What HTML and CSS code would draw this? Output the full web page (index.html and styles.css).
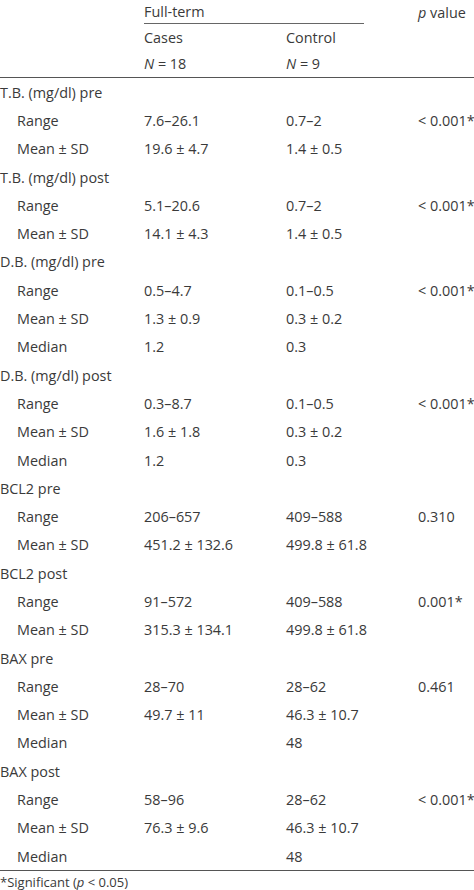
FILE: index.html
```html
<!DOCTYPE html>
<html>
<head>
<meta charset="utf-8">
<link rel="stylesheet" href="styles.css">
</head>
<body>
<div class="frame">
<table class="tbl">
  <colgroup>
    <col class="c1"><col class="c2"><col class="c3"><col class="c4">
  </colgroup>
  <thead>
    <tr class="h1"><th></th><th colspan="2" class="span"><span class="spanline">Full-term</span></th><th><i>p</i> value</th></tr>
    <tr class="h2"><th></th><th>Cases</th><th>Control</th><th></th></tr>
    <tr class="h3"><th></th><th><i>N</i> = 18</th><th><i>N</i> = 9</th><th></th></tr>
  </thead>
  <tbody>
    <tr><td class="grp">T.B. (mg/dl) pre</td><td></td><td></td><td></td></tr>
    <tr><td class="sub">Range</td><td>7.6–26.1</td><td>0.7–2</td><td>&lt; 0.001*</td></tr>
    <tr><td class="sub">Mean ± SD</td><td>19.6 ± 4.7</td><td>1.4 ± 0.5</td><td></td></tr>
    <tr><td class="grp">T.B. (mg/dl) post</td><td></td><td></td><td></td></tr>
    <tr><td class="sub">Range</td><td>5.1–20.6</td><td>0.7–2</td><td>&lt; 0.001*</td></tr>
    <tr><td class="sub">Mean ± SD</td><td>14.1 ± 4.3</td><td>1.4 ± 0.5</td><td></td></tr>
    <tr><td class="grp">D.B. (mg/dl) pre</td><td></td><td></td><td></td></tr>
    <tr><td class="sub">Range</td><td>0.5–4.7</td><td>0.1–0.5</td><td>&lt; 0.001*</td></tr>
    <tr><td class="sub">Mean ± SD</td><td>1.3 ± 0.9</td><td>0.3 ± 0.2</td><td></td></tr>
    <tr><td class="sub">Median</td><td>1.2</td><td>0.3</td><td></td></tr>
    <tr><td class="grp">D.B. (mg/dl) post</td><td></td><td></td><td></td></tr>
    <tr><td class="sub">Range</td><td>0.3–8.7</td><td>0.1–0.5</td><td>&lt; 0.001*</td></tr>
    <tr><td class="sub">Mean ± SD</td><td>1.6 ± 1.8</td><td>0.3 ± 0.2</td><td></td></tr>
    <tr><td class="sub">Median</td><td>1.2</td><td>0.3</td><td></td></tr>
    <tr><td class="grp">BCL2 pre</td><td></td><td></td><td></td></tr>
    <tr><td class="sub">Range</td><td>206–657</td><td>409–588</td><td>0.310</td></tr>
    <tr><td class="sub">Mean ± SD</td><td>451.2 ± 132.6</td><td>499.8 ± 61.8</td><td></td></tr>
    <tr><td class="grp">BCL2 post</td><td></td><td></td><td></td></tr>
    <tr><td class="sub">Range</td><td>91–572</td><td>409–588</td><td>0.001*</td></tr>
    <tr><td class="sub">Mean ± SD</td><td>315.3 ± 134.1</td><td>499.8 ± 61.8</td><td></td></tr>
    <tr><td class="grp">BAX pre</td><td></td><td></td><td></td></tr>
    <tr><td class="sub">Range</td><td>28–70</td><td>28–62</td><td>0.461</td></tr>
    <tr><td class="sub">Mean ± SD</td><td>49.7 ± 11</td><td>46.3 ± 10.7</td><td></td></tr>
    <tr><td class="sub">Median</td><td></td><td>48</td><td></td></tr>
    <tr><td class="grp">BAX post</td><td></td><td></td><td></td></tr>
    <tr><td class="sub">Range</td><td>58–96</td><td>28–62</td><td>&lt; 0.001*</td></tr>
    <tr><td class="sub">Mean ± SD</td><td>76.3 ± 9.6</td><td>46.3 ± 10.7</td><td></td></tr>
    <tr class="last"><td class="sub">Median</td><td></td><td>48</td><td></td></tr>
  </tbody>
</table>
<p class="note">*Significant (<i>p</i> &lt; 0.05)</p>
</div>
</body>
</html>
```
FILE: styles.css
```css
html, body {
  margin: 0;
  padding: 0;
  background: #ffffff;
  overflow: hidden;
}
.frame {
  width: 474px;
  height: 890px;
  overflow: hidden;
  font-family: "Open Sans", "Liberation Sans", sans-serif;
  font-size: 14.4px;
  color: #3a3a3a;
}
.tbl {
  width: 492px;
  table-layout: fixed;
  border-collapse: collapse;
  border-spacing: 0;
}
.c1 { width: 144px; }
.c2 { width: 142px; }
.c3 { width: 132px; }
.c4 { width: 74px; }
.tbl th, .tbl td {
  padding: 0;
  text-align: left;
  font-weight: normal;
  white-space: nowrap;
  vertical-align: middle;
}
.h1 th { height: 24px; }
.h2 th { height: 26px; }
.h3 th { height: 27px; border-bottom: 1px solid #555; }
.tbl th.span {
  padding-right: 110px;
}
.spanline {
  display: block;
  width: 220px;
  height: 23px;
  line-height: 23px;
  border-bottom: 1px solid #666;
}
.tbl tbody td { height: 28.3px; }
.tbl tbody tr.last td { border-bottom: 1px solid #555; }
.grp { padding-left: 0; }
.tbl td.sub { padding-left: 17px; }
.note {
  margin: 0;
  height: 22px;
  line-height: 22px;
  font-size: 13px;
}
```
